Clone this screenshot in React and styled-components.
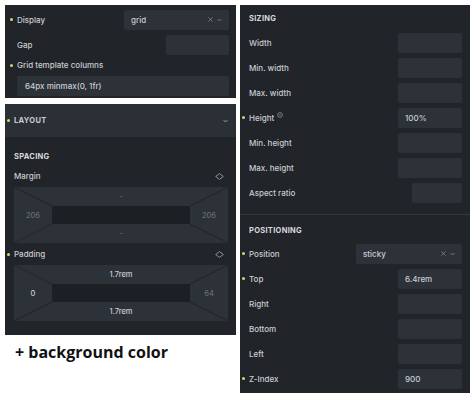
import React from "react";
import styled, { createGlobalStyle } from "styled-components";

const GlobalStyle = createGlobalStyle`
  body {
    margin: 0;
    background: #ffffff;
    font-family: "Inter", "Noto Sans", sans-serif;
  }
`;

const Page = styled.div`
  display: flex;
  align-items: flex-start;
  gap: 4px;
  padding: 5px 0 0 5px;
  width: 474px;
  height: 398px;
  box-sizing: border-box;
`;

const LeftColumn = styled.div`
  display: flex;
  flex-direction: column;
  width: 231px;
`;

const Panel = styled.div`
  background: #212428;
  box-sizing: border-box;
  color: #c9cdd2;
  font-size: 8px;
  font-weight: 500;
`;

const DisplayPanel = styled(Panel)`
  height: 93px;
  padding: 2px 7px 0 12px;
`;

const LayoutPanel = styled(Panel)`
  height: 231px;
  margin-top: 6px;
`;

const RightPanel = styled(Panel)`
  width: 230px;
  height: 388px;
  padding: 0 8px 0 9px;
`;

const Row = styled.div`
  display: flex;
  align-items: center;
  justify-content: space-between;
  height: 25px;
`;

const Label = styled.span`
  position: relative;
  display: inline-flex;
  align-items: center;
  gap: 3px;
  white-space: nowrap;

  &::before {
    content: "";
    display: ${(p) => (p.$marked ? "block" : "none")};
    position: absolute;
    left: -7px;
    top: 50%;
    width: 3px;
    height: 3px;
    margin-top: -1.5px;
    border-radius: 50%;
    background: #cfdc6e;
  }
`;

const Input = styled.div`
  display: flex;
  align-items: center;
  width: ${(p) => p.$width || 64}px;
  height: 20px;
  padding: 0 7px;
  box-sizing: border-box;
  border-radius: 2px;
  background: #2d3239;
  color: #c9cdd2;
  font-size: 8px;
`;

const Select = styled(Input)`
  justify-content: space-between;
`;

const SelectControls = styled.span`
  display: flex;
  align-items: center;
  gap: 4px;
  color: #7c8189;
`;

const FieldLabel = styled.div`
  display: flex;
  align-items: center;
  height: 14px;
  margin-top: 1px;
`;

const WideInput = styled(Input)`
  width: 100%;
  margin-top: 4px;
  padding-left: 8px;
`;

const SectionBar = styled.div`
  display: flex;
  align-items: center;
  justify-content: space-between;
  height: 33px;
  padding: 0 8px 0 9px;
  background: #2b3037;
  font-size: 7.5px;
  font-weight: 700;
  letter-spacing: 0.3px;
`;

const SectionBody = styled.div`
  padding: 12px 8px 0 9px;
`;

const Heading = styled.div`
  height: 14px;
  display: flex;
  align-items: center;
  font-size: 7.5px;
  font-weight: 700;
  letter-spacing: 0.3px;
  color: #d6d9dd;
  margin-top: ${(p) => p.$top || 0}px;
  margin-bottom: ${(p) => p.$bottom || 0}px;
`;

const SpacingRow = styled.div`
  display: flex;
  align-items: center;
  justify-content: space-between;
  height: 16px;
  margin-top: ${(p) => p.$top || 0}px;
  padding-right: 4px;
`;

const BoxModel = styled.div`
  position: relative;
  display: grid;
  grid-template-columns: 38px 1fr 38px;
  grid-template-rows: 19px 18px 19px;
  height: 56px;
  margin-top: 3px;
  background: #2d3239;
  font-size: 7.5px;
`;

const BoxValue = styled.div`
  display: flex;
  align-items: center;
  justify-content: center;
  grid-column: ${(p) => p.$span || "auto"};
  color: ${(p) => (p.$dim ? "#646a72" : "#c9cdd2")};
  position: relative;
  z-index: 1;
`;

const BoxInner = styled.div`
  background: #1c1f23;
  position: relative;
  z-index: 1;
`;

const BoxLines = styled.svg`
  position: absolute;
  inset: 0;
  width: 100%;
  height: 100%;
`;

const Divider = styled.div`
  height: 1px;
  margin: 9px -8px 0 -9px;
  background: #343940;
`;

const Caption = styled.div`
  margin-top: 6px;
  padding-left: 10px;
  font-family: "Open Sans", sans-serif;
  font-weight: 700;
  font-size: 16px;
  color: #111111;
`;

const Clear = () => (
  <svg width="5" height="5" viewBox="0 0 5 5">
    <path d="M0.5 0.5 L4.5 4.5 M4.5 0.5 L0.5 4.5" stroke="#7c8189" strokeWidth="0.9" />
  </svg>
);

const Chevron = ({ color = "#7c8189" }) => (
  <svg width="5" height="4" viewBox="0 0 5 4">
    <path d="M0.6 1 L2.5 3 L4.4 1" fill="none" stroke={color} strokeWidth="0.9" />
  </svg>
);

const Diamond = () => (
  <svg width="9" height="7" viewBox="0 0 9 7">
    <path
      d="M4.5 0.6 L8.3 3.5 L4.5 6.4 L0.7 3.5 Z"
      fill="none"
      stroke="#9aa0a7"
      strokeWidth="0.9"
      strokeLinejoin="round"
    />
  </svg>
);

const Info = () => (
  <svg width="6" height="6" viewBox="0 0 6 6" style={{ marginTop: -5 }}>
    <circle cx="3" cy="3" r="2.4" fill="none" stroke="#8d939a" strokeWidth="0.8" />
    <circle cx="3" cy="3" r="0.8" fill="#8d939a" />
  </svg>
);

const SelectField = ({ width, value }) => (
  <Select $width={width}>
    <span>{value}</span>
    <SelectControls>
      <Clear />
      <Chevron />
    </SelectControls>
  </Select>
);

const Box = ({ top, left, right, bottom }) => (
  <BoxModel>
    <BoxLines viewBox="0 0 214 56" preserveAspectRatio="none">
      <g stroke="#22262b" strokeWidth="1">
        <line x1="0" y1="0" x2="38" y2="19" />
        <line x1="214" y1="0" x2="176" y2="19" />
        <line x1="0" y1="56" x2="38" y2="37" />
        <line x1="214" y1="56" x2="176" y2="37" />
      </g>
    </BoxLines>
    <BoxValue $span="1 / 4" $dim={top.dim}>{top.text}</BoxValue>
    <BoxValue $dim={left.dim}>{left.text}</BoxValue>
    <BoxInner />
    <BoxValue $dim={right.dim}>{right.text}</BoxValue>
    <BoxValue $span="1 / 4" $dim={bottom.dim}>{bottom.text}</BoxValue>
  </BoxModel>
);

const sizing = [
  { label: "Width" },
  { label: "Min. width" },
  { label: "Max. width" },
  { label: "Height", value: "100%", marked: true, info: true },
  { label: "Min. height" },
  { label: "Max. height" },
  { label: "Aspect ratio", width: 50 },
];

const positioning = [
  { label: "Top", value: "6.4rem", marked: true },
  { label: "Right" },
  { label: "Bottom" },
  { label: "Left" },
  { label: "Z-Index", value: "900", marked: true },
];

const App = () => {
  return (
    <Page>
      <GlobalStyle />
      <LeftColumn>
        <DisplayPanel>
          <Row>
            <Label $marked>Display</Label>
            <SelectField width={105} value="grid" />
          </Row>
          <Row>
            <Label>Gap</Label>
            <Input $width={63} />
          </Row>
          <FieldLabel>
            <Label $marked>Grid template columns</Label>
          </FieldLabel>
          <WideInput>64px minmax(0, 1fr)</WideInput>
        </DisplayPanel>

        <LayoutPanel>
          <SectionBar>
            <Label $marked>LAYOUT</Label>
            <Chevron color="#a3a8ae" />
          </SectionBar>
          <SectionBody>
            <Heading>SPACING</Heading>
            <SpacingRow $top={5}>
              <Label>Margin</Label>
              <Diamond />
            </SpacingRow>
            <Box
              top={{ text: "-", dim: true }}
              left={{ text: "206", dim: true }}
              right={{ text: "206", dim: true }}
              bottom={{ text: "-", dim: true }}
            />
            <SpacingRow $top={3}>
              <Label $marked>Padding</Label>
              <Diamond />
            </SpacingRow>
            <Box
              top={{ text: "1.7rem" }}
              left={{ text: "0" }}
              right={{ text: "64", dim: true }}
              bottom={{ text: "1.7rem" }}
            />
          </SectionBody>
        </LayoutPanel>

        <Caption>+ background color</Caption>
      </LeftColumn>

      <RightPanel>
        <Heading $top={6} $bottom={5}>SIZING</Heading>
        {sizing.map((item) => (
          <Row key={item.label}>
            <Label $marked={item.marked}>
              {item.label}
              {item.info && <Info />}
            </Label>
            <Input $width={item.width}>{item.value}</Input>
          </Row>
        ))}
        <Divider />
        <Heading $top={8} $bottom={4}>POSITIONING</Heading>
        <Row>
          <Label $marked>Position</Label>
          <SelectField width={106} value="sticky" />
        </Row>
        {positioning.map((item) => (
          <Row key={item.label}>
            <Label $marked={item.marked}>{item.label}</Label>
            <Input>{item.value}</Input>
          </Row>
        ))}
      </RightPanel>
    </Page>
  );
};

export default App;
